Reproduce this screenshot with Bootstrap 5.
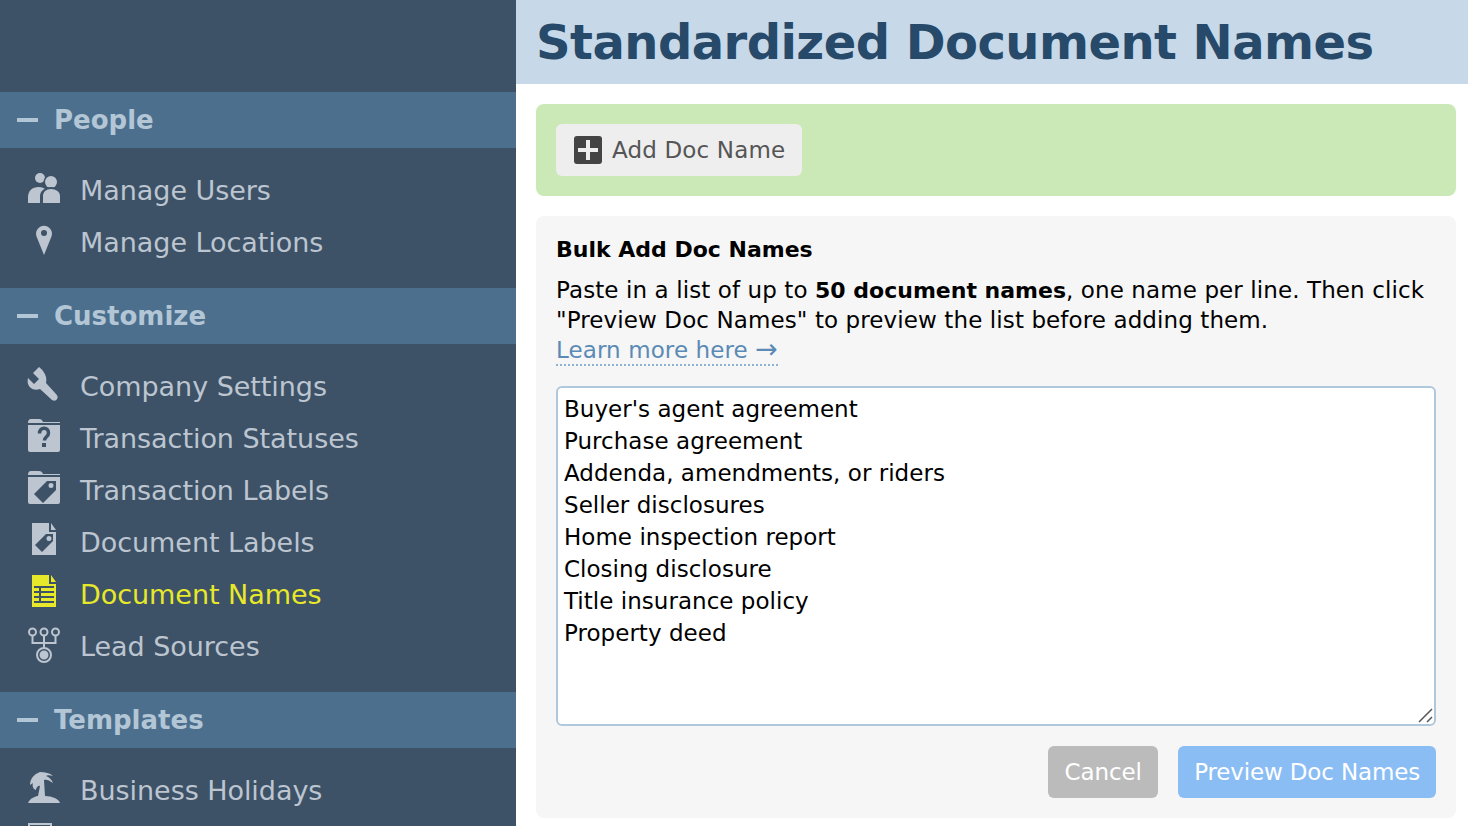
<!DOCTYPE html>
<html lang="en">
<head>
<meta charset="utf-8">
<title>Standardized Document Names</title>
<link href="https://cdn.jsdelivr.net/npm/bootstrap@5.3.0/dist/css/bootstrap.min.css" rel="stylesheet">
<style>
html,body{height:826px;overflow:hidden}
body{font-family:"DejaVu Sans","Liberation Sans",sans-serif;font-size:23px;color:#000;background:#fff}
.shell{height:826px}
.side{width:516px;flex:none;background:#3d5267;padding-top:92px;overflow:hidden}
.sec-head{height:56px;background:#4c6f8e;color:#b3c6d6;font-weight:700;font-size:26px;padding-left:17px;gap:16px}
.dash{width:21px;height:4px;background:#b3c6d6;flex:none}
.sec-body{padding:16px 0 20px}
.side-item{height:52px;padding:2px 0 0 28px;color:#bcc5d0;font-size:27px;letter-spacing:-.05px;gap:20px;text-decoration:none}
.side-item.on{color:#e8e82a}
.side-item svg{flex:none;overflow:visible;fill:currentColor;margin-top:-2px}
.holes{fill:#3d5267;stroke:#3d5267}
.main-col{flex:1;min-width:0}
.title-bar{height:84px;background:#c7d9e8;padding:2px 0 0 20px}
.title-bar h1{font-family:"DejaVu Sans",sans-serif;font-weight:700;font-size:48px;letter-spacing:-.55px;color:#27496a;margin:0;white-space:nowrap}
.work{padding:20px 12px 0 20px}
.green-box{background:#cae9b7;border-radius:8px;padding:20px;height:92px;margin-bottom:20px}
.btn-add{height:52px;background:#eee;color:#555;font-size:23px;letter-spacing:.15px;border:0;border-radius:6px;padding:0 17px 0 18px;gap:10px}
.btn-add:hover{background:#eee;color:#555}
.gray-box{background:#f6f6f6;border-radius:8px;padding:20px;height:602px}
.gray-box h2{font-size:22px;font-weight:700;line-height:28px;margin:0 0 11px}
.gray-box p{line-height:30px;letter-spacing:.1px;margin:0 0 20px}
.gray-box strong{font-size:22px;letter-spacing:0;line-height:1}
.learn{color:#5b8ab5;text-decoration:none;border-bottom:2px dotted #8fb2d2;display:inline-block;line-height:28px}
.go-arrow{font-size:27px;line-height:1}
.names-wrap{margin-bottom:20px}
.names{height:340px;border:2px solid #b0c8dc;border-radius:6px;font-size:23px;letter-spacing:.03px;line-height:32px;padding:5px 6px 6px;color:#000;background:#fff;font-family:inherit;resize:none}
.grip{right:3px;bottom:3px;pointer-events:none}
.btn-row{gap:20px}
.act{height:52px;font-size:23px;letter-spacing:-.15px;border:0;border-radius:6px;color:#fff;padding:0 16px}
.act-cancel{min-width:110px}
.act-cancel,.act-cancel:hover{background:#bbb;color:#fff}
.act-go,.act-go:hover{background:#8bbdf5;color:#fff}
</style>
</head>
<body>
<div class="d-flex shell">
  <nav class="side">
    <div class="sec-head d-flex align-items-center"><span class="dash"></span>People</div>
    <div class="sec-body">
      <a class="side-item d-flex align-items-center" href="#"><svg width="32" height="36" viewBox="0 0 32 36"><circle cx="12" cy="6" r="5"/><path d="M0 31v-6c0-6 4-10 11-10 3 0 5 1 6 2l-3 14z"/><circle class="holes" cx="23" cy="10" r="7" stroke-width="1"/><circle cx="23" cy="10" r="6"/><path class="holes" d="M12 32v-8c0-5 5-9 11-9s10 4 10 9v8z" stroke-width="0"/><path d="M15 31v-7c0-4 3-7 8-7s9 3 9 7v7z"/></svg>Manage Users</a>
      <a class="side-item d-flex align-items-center" href="#"><svg width="32" height="36" viewBox="0 0 32 36"><path fill-rule="evenodd" d="M16 31L8.700 13A8 8 0 1 1 23.300 13zM16 6a3 3 0 1 0 0 6 3 3 0 0 0 0-6z"/></svg>Manage Locations</a>
    </div>
    <div class="sec-head d-flex align-items-center"><span class="dash"></span>Customize</div>
    <div class="sec-body">
      <a class="side-item d-flex align-items-center" href="#"><svg width="32" height="36" viewBox="0 0 32 36"><path d="M11-1L5 5l6 6-5 5-6-6c-1 4 0 8 3 10 2 2 6 2 9 1l12 11c2 1 4 1 5-1 1-1 1-3-1-5L18 15c1-4 0-8-3-12-1-2-3-3-4-4z"/></svg>Company Settings</a>
      <a class="side-item d-flex align-items-center" href="#"><svg width="32" height="36" viewBox="0 0 32 36"><path d="M0 3q0-4 3-4h8q3 0 4 3h17v1H0zM0 5h32v25q0 2-2 2H2q-2 0-2-2z"/><path d="M11.500 13.500c0-7 9-7 9 -.5 0 4-4 3.500-4 7.500" fill="none" stroke="#3d5267" stroke-width="3.500"/><rect class="holes" x="14" y="23" width="4" height="4" stroke-width="0"/></svg>Transaction Statuses</a>
      <a class="side-item d-flex align-items-center" href="#"><svg width="32" height="36" viewBox="0 0 32 36"><path d="M0 3q0-4 3-4h8q3 0 4 3h17v1H0zM0 5h32v25q0 2-2 2H2q-2 0-2-2z"/><path class="holes" stroke-width="0" fill-rule="evenodd" d="M6 22L19 9h9v9L15 31zM23 11a2.500 2.500 0 1 0 0 5 2.500 2.500 0 0 0 0-5z"/></svg>Transaction Labels</a>
      <a class="side-item d-flex align-items-center" href="#"><svg width="32" height="36" viewBox="0 0 32 36"><path d="M4-1h17v9h7v23H4zM23-1l5 7h-5z"/><path class="holes" stroke-width="0" fill-rule="evenodd" d="M7 21l11-11h7v7L14 28zM21 12a2.500 2.500 0 1 0 0 5 2.500 2.500 0 0 0 0-5z"/></svg>Document Labels</a>
      <a class="side-item on d-flex align-items-center" href="#"><svg width="32" height="36" viewBox="0 0 32 36"><path d="M4-1h17v9h7v23H4zM23-1l5 7h-5z"/><path class="holes" stroke-width="0" d="M6 10h20v2H6zM6 15h20v2H6zM6 20h20v2H6zM6 25h20v2H6zM11 10h2v17h-2z"/></svg>Document Names</a>
      <a class="side-item d-flex align-items-center" href="#"><svg width="32" height="36" viewBox="0 0 32 36" style="fill:none" stroke="currentColor" stroke-width="2"><circle cx="4.500" cy="4" r="3.500"/><circle cx="16" cy="4" r="3.500"/><circle cx="27.500" cy="4" r="3.500"/><path d="M4.500 8v7h23V8M16 8v12"/><circle cx="16" cy="27" r="7"/><circle cx="16" cy="27" r="3.500" fill="currentColor"/></svg>Lead Sources</a>
    </div>
    <div class="sec-head d-flex align-items-center"><span class="dash"></span>Templates</div>
    <div class="sec-body">
      <a class="side-item d-flex align-items-center" href="#"><svg width="32" height="36" viewBox="0 0 32 36"><path d="M0 31C2 26 8 24 10 24L12 14C10 13 8 16 8 18 5 17 4 14 5 11L2 13C2 7 6 2 12 0 17 0 22 1 25 4 22 3 19 3 18 4 21 5 24 8 25 11 21 8 18 7 16 8L17 24C24 24 31 27 32 31Z"/></svg>Business Holidays</a>
      <a class="side-item d-flex align-items-center" href="#"><svg width="32" height="36" viewBox="0 0 32 36" style="fill:none" stroke="currentColor" stroke-width="2"><rect x="1" y="0" width="22" height="30"/></svg></a>
    </div>
  </nav>
  <main class="main-col">
    <header class="title-bar d-flex align-items-center"><h1>Standardized Document Names</h1></header>
    <div class="work">
      <div class="green-box">
        <button type="button" class="btn btn-add d-inline-flex align-items-center"><svg width="28" height="28" viewBox="0 0 28 28"><rect width="28" height="28" rx="3" fill="#444"/><path d="M12 4h4v8h8v4h-8v8h-4v-8H4v-4h8z" fill="#eee"/></svg>Add Doc Name</button>
      </div>
      <section class="gray-box">
        <h2>Bulk Add Doc Names</h2>
        <p>Paste in a list of up to <strong>50 document names</strong>, one name per line. Then click "Preview Doc Names" to preview the list before adding them.<br><a class="learn" href="#">Learn more here <span class="go-arrow">→</span></a></p>
        <div class="names-wrap position-relative">
          <textarea class="form-control names" spellcheck="false">Buyer's agent agreement
Purchase agreement
Addenda, amendments, or riders
Seller disclosures
Home inspection report
Closing disclosure
Title insurance policy
Property deed</textarea>
          <svg class="grip position-absolute" width="15" height="15" viewBox="0 0 15 15" fill="none" stroke="#555" stroke-width="1.500"><path d="M1 14L14 1M9 14l5-5"/></svg>
        </div>
        <div class="d-flex justify-content-end btn-row">
          <button type="button" class="btn act act-cancel">Cancel</button>
          <button type="button" class="btn act act-go">Preview Doc Names</button>
        </div>
      </section>
    </div>
  </main>
</div>
<script src="https://cdn.jsdelivr.net/npm/bootstrap@5.3.0/dist/js/bootstrap.bundle.min.js"></script>
</body>
</html>
